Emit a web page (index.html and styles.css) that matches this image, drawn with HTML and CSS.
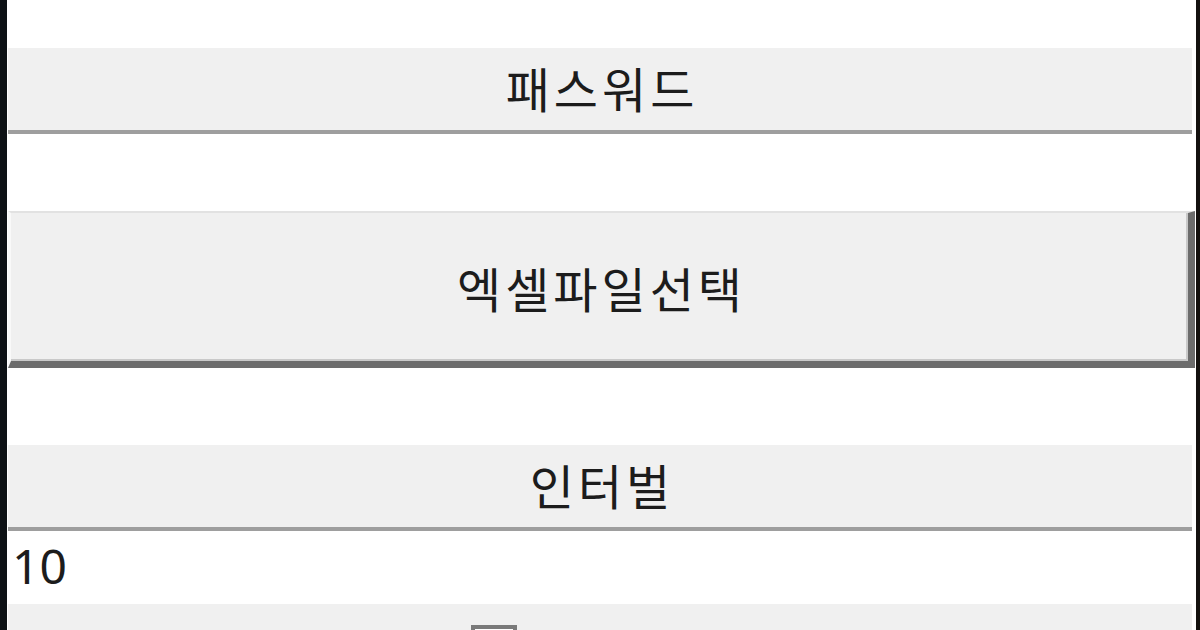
FILE: index.html
```html
<!DOCTYPE html>
<html lang="ko">
<head>
<meta charset="utf-8">
<title>설정</title>
<link rel="stylesheet" href="styles.css">
</head>
<body>
<div class="window">
  <div class="gap top-gap"></div>
  <div class="label">패스워드</div>
  <div class="gap"></div>
  <div class="btn">엑셀파일선택</div>
  <div class="gap"></div>
  <div class="label">인터벌</div>
  <div class="textbox">10</div>
  <div class="check-row">
    <span class="check-box"></span>
    <span class="check-text">반복 실행</span>
  </div>
</div>
</body>
</html>
```

FILE: styles.css
```css
html, body {
  margin: 0;
  padding: 0;
  background: #ffffff;
}

.window {
  width: 1200px;
  height: 630px;
  box-sizing: border-box;
  overflow: hidden;
  display: flex;
  flex-direction: column;
  background: #ffffff;
  border-left: 7px solid #0d1115;
  border-right: 4px solid #14110f;
  padding-left: 1px;
  font-family: "Noto Sans CJK KR", "Noto Sans", sans-serif;
  color: #1c1c1c;
}

.gap {
  flex: 0 0 77px;
}

.top-gap {
  flex: 0 0 48px;
}

.label {
  flex: 0 0 86px;
  box-sizing: border-box;
  margin-right: 4px;
  background: #f0f0f0;
  border-bottom: 4px solid #9e9e9e;
  display: flex;
  align-items: center;
  justify-content: center;
  font-size: 48px;
  line-height: 1;
  letter-spacing: 4px;
  padding-left: 4px;
  padding-bottom: 4px;
}

.btn {
  flex: 0 0 157px;
  box-sizing: border-box;
  margin-right: 1px;
  background: #f0f0f0;
  border-style: solid;
  border-width: 2px 7px 7px 3px;
  border-color: #e2e2e2 #6c6c6c #6c6c6c #f9f9f9;
  box-shadow: inset -2px -2px 0 #c9c9c9;
  display: flex;
  align-items: center;
  justify-content: center;
  font-size: 48px;
  line-height: 1;
  letter-spacing: 4px;
  padding-left: 4px;
}

.textbox {
  flex: 0 0 73px;
  margin-right: 4px;
  background: #ffffff;
  font-family: "Noto Sans", "Noto Sans CJK KR", sans-serif;
  font-size: 48px;
  line-height: normal;
  padding-left: 4px;
  padding-top: 2px;
  box-sizing: border-box;
}

.check-row {
  flex: 0 0 86px;
  box-sizing: border-box;
  margin-right: 4px;
  background: #f0f0f0;
  display: flex;
  align-items: flex-start;
  justify-content: center;
  gap: 14px;
  padding-top: 21px;
  padding-left: 12px;
}

.check-box {
  flex: 0 0 auto;
  width: 46px;
  height: 46px;
  box-sizing: border-box;
  border: 4px solid #7a7a7a;
  background: #ffffff;
}

.check-text {
  font-size: 48px;
  line-height: 1;
  letter-spacing: 4px;
  margin-top: 3px;
  white-space: nowrap;
}
```
